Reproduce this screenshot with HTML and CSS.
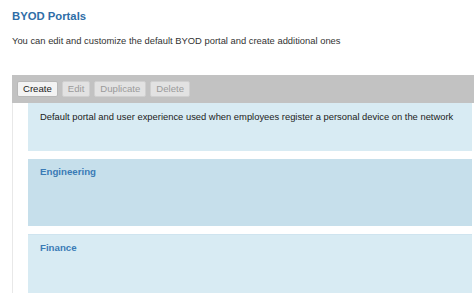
FILE: index.html
```html
<!DOCTYPE html>
<html>
<head>
<meta charset="utf-8">
<link rel="stylesheet" href="styles.css">
</head>
<body>
<div class="page">
  <h1 class="title">BYOD Portals</h1>
  <p class="subtitle">You can edit and customize the default BYOD portal and create additional ones</p>
  <div class="toolbar">
    <button class="btn">Create</button>
    <button class="btn disabled">Edit</button>
    <button class="btn disabled">Duplicate</button>
    <button class="btn disabled">Delete</button>
  </div>
  <div class="panel">
    <div class="row row-default">
      <div class="desc">Default portal and user experience used when employees register a personal device on the network</div>
    </div>
    <div class="row row-eng">
      <div class="name">Engineering</div>
    </div>
    <div class="row row-fin">
      <div class="name">Finance</div>
    </div>
  </div>
</div>
</body>
</html>
```
FILE: styles.css
```css
html, body {
  margin: 0;
  padding: 0;
  background: #ffffff;
  font-family: "Liberation Sans", Arial, sans-serif;
  overflow: hidden;
}
.page {
  padding-left: 12px;
  width: 462px;
  height: 293px;
  display: flex;
  flex-direction: column;
}
.title {
  margin: 9px 0 0 0;
  font-size: 11.3px;
  line-height: 14px;
  font-weight: bold;
  color: #2f6ea7;
}
.subtitle {
  margin: 12px 0 0 0;
  font-size: 9.4px;
  line-height: 12px;
  color: #333333;
}
.toolbar {
  margin-top: 28px;
  height: 28px;
  background: #c2c2c2;
  display: flex;
  align-items: center;
  gap: 4px;
  padding-left: 5px;
  box-sizing: border-box;
}
.btn {
  height: 16px;
  padding: 0 5px;
  font-family: "Liberation Sans", Arial, sans-serif;
  font-size: 9.6px;
  line-height: 14px;
  border: 1px solid #b8b8b8;
  border-radius: 2px;
  background: #f3f3f3;
  color: #222222;
  margin: 0;
}
.btn.disabled {
  background: #e2e2e2;
  border-color: #d0d0d0;
  color: #9a9a9a;
}
.panel {
  flex: 1;
  border-left: 1px solid #e8e8e8;
  padding: 0 2px 0 15px;
  display: flex;
  flex-direction: column;
  gap: 8px;
}
.row {
  padding: 7px 12px 0 12px;
  box-sizing: border-box;
}
.row-default {
  height: 48px;
  background: #d8ebf3;
  padding-top: 8px;
}
.row-eng {
  height: 67px;
  background: #c6dfeb;
}
.row-fin {
  flex: 1;
  background: #d8ebf3;
  border-top: 1px solid #cfe4ef;
}
.desc {
  font-size: 9.4px;
  line-height: 12px;
  color: #222222;
  white-space: nowrap;
}
.name {
  font-size: 9.7px;
  line-height: 12px;
  font-weight: bold;
  color: #3a7bb6;
}
```
